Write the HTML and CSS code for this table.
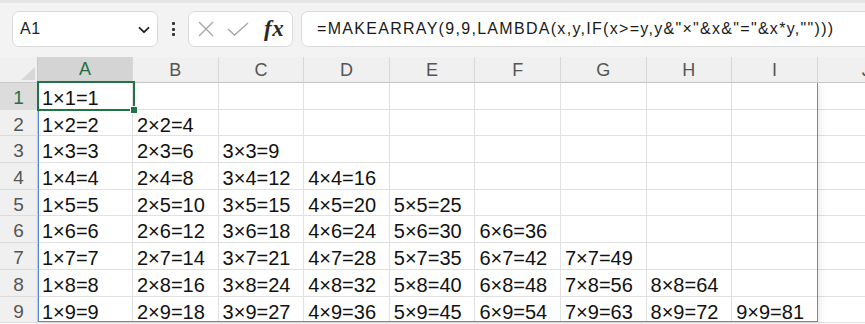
FILE: index.html
```html
<!DOCTYPE html>
<html>
<head>
<meta charset="utf-8">
<link rel="stylesheet" href="styles.css">
</head>
<body>
<div class="app">
  <div class="toolbar">
    <div class="namebox">
      <span class="ref">A1</span>
      <svg class="chev" width="12" height="8" viewBox="0 0 12 8"><path d="M1.5 1.8 L6 6.2 L10.5 1.8" fill="none" stroke="#222" stroke-width="1.8" stroke-linecap="round" stroke-linejoin="round"/></svg>
    </div>
    <div class="dots"><i></i><i></i><i></i></div>
    <div class="fxbox">
      <svg width="18" height="16" viewBox="0 0 18 16"><path d="M2 1 L16 15 M16 1 L2 15" stroke="#a6a6a6" stroke-width="1.4" fill="none"/></svg>
      <svg width="22" height="14" viewBox="0 0 22 14"><path d="M1 7 L7.5 13 L21 1" stroke="#a6a6a6" stroke-width="1.4" fill="none"/></svg>
      <span class="fx">fx</span>
    </div>
    <div class="formula">=MAKEARRAY(9,9,LAMBDA(x,y,IF(x&gt;=y,y&amp;"×"&amp;x&amp;"="&amp;x*y,"")))</div>
  </div>

  <div class="sheet">
    <div class="corner"><svg width="14" height="13" viewBox="0 0 14 13"><polygon points="14,0 14,13 0,13" fill="#d6d6d6"/></svg></div>
    <div class="h on">A</div><div class="h">B</div><div class="h">C</div><div class="h">D</div><div class="h">E</div><div class="h">F</div><div class="h">G</div><div class="h">H</div><div class="h">I</div><div class="h j">J</div>

    <div class="rh on">1</div><div class="c">1×1=1</div><div class="c"></div><div class="c"></div><div class="c"></div><div class="c"></div><div class="c"></div><div class="c"></div><div class="c"></div><div class="c"></div><div class="c"></div>
    <div class="rh">2</div><div class="c">1×2=2</div><div class="c">2×2=4</div><div class="c"></div><div class="c"></div><div class="c"></div><div class="c"></div><div class="c"></div><div class="c"></div><div class="c"></div><div class="c"></div>
    <div class="rh">3</div><div class="c">1×3=3</div><div class="c">2×3=6</div><div class="c">3×3=9</div><div class="c"></div><div class="c"></div><div class="c"></div><div class="c"></div><div class="c"></div><div class="c"></div><div class="c"></div>
    <div class="rh">4</div><div class="c">1×4=4</div><div class="c">2×4=8</div><div class="c">3×4=12</div><div class="c">4×4=16</div><div class="c"></div><div class="c"></div><div class="c"></div><div class="c"></div><div class="c"></div><div class="c"></div>
    <div class="rh">5</div><div class="c">1×5=5</div><div class="c">2×5=10</div><div class="c">3×5=15</div><div class="c">4×5=20</div><div class="c">5×5=25</div><div class="c"></div><div class="c"></div><div class="c"></div><div class="c"></div><div class="c"></div>
    <div class="rh">6</div><div class="c">1×6=6</div><div class="c">2×6=12</div><div class="c">3×6=18</div><div class="c">4×6=24</div><div class="c">5×6=30</div><div class="c">6×6=36</div><div class="c"></div><div class="c"></div><div class="c"></div><div class="c"></div>
    <div class="rh">7</div><div class="c">1×7=7</div><div class="c">2×7=14</div><div class="c">3×7=21</div><div class="c">4×7=28</div><div class="c">5×7=35</div><div class="c">6×7=42</div><div class="c">7×7=49</div><div class="c"></div><div class="c"></div><div class="c"></div>
    <div class="rh">8</div><div class="c">1×8=8</div><div class="c">2×8=16</div><div class="c">3×8=24</div><div class="c">4×8=32</div><div class="c">5×8=40</div><div class="c">6×8=48</div><div class="c">7×8=56</div><div class="c">8×8=64</div><div class="c"></div><div class="c"></div>
    <div class="rh">9</div><div class="c">1×9=9</div><div class="c">2×9=18</div><div class="c">3×9=27</div><div class="c">4×9=36</div><div class="c">5×9=45</div><div class="c">6×9=54</div><div class="c">7×9=63</div><div class="c">8×9=72</div><div class="c">9×9=81</div><div class="c"></div>

    <div class="spill"></div>
    <div class="sel"><span class="handle"></span></div>
  </div>
</div>
</body>
</html>
```

FILE: styles.css
```css
html, body {
  margin: 0;
  padding: 0;
  background: #ffffff;
}
body {
  width: 865px;
  height: 324px;
  overflow: hidden;
  font-family: "Liberation Sans", Arial, sans-serif;
}
.app {
  width: 865px;
  height: 324px;
  overflow: hidden;
}

/* ---------- formula bar ---------- */
.toolbar {
  height: 57px;
  box-sizing: border-box;
  display: flex;
  align-items: flex-start;
  padding: 8px 0 0 12px;
  background: #f3f3f3;
  border-top: 3px solid #e6e6e6;
}
.namebox {
  width: 146px;
  height: 36px;
  box-sizing: border-box;
  background: #fff;
  border: 1px solid #dadada;
  border-radius: 7px;
  display: flex;
  align-items: center;
  justify-content: space-between;
  padding: 0 7px 0 7px;
}
.ref {
  font-size: 16px;
  letter-spacing: 0.6px;
  color: #222;
}
.chev {
  margin-top: 1px;
}
.dots {
  width: 30px;
  height: 36px;
  display: flex;
  flex-direction: column;
  align-items: center;
  justify-content: center;
  gap: 2.5px;
}
.dots i {
  display: block;
  width: 3px;
  height: 3px;
  border-radius: 1px;
  background: #333;
}
.fxbox {
  width: 105px;
  height: 36px;
  box-sizing: border-box;
  background: #fff;
  border: 1px solid #dadada;
  border-radius: 7px;
  display: flex;
  align-items: center;
  padding: 0 0 0 8px;
  gap: 12px;
}
.fx {
  font-family: "Liberation Serif", "Times New Roman", serif;
  font-style: italic;
  font-weight: bold;
  font-size: 23px;
  color: #2a2a2a;
  margin-left: 3px;
  letter-spacing: 0.5px;
}
.formula {
  flex: 1;
  margin-left: 8px;
  margin-right: -12px;
  height: 36px;
  box-sizing: border-box;
  background: #fff;
  border: 1px solid #dadada;
  border-radius: 7px;
  padding-left: 15px;
  font-size: 16px;
  letter-spacing: 1.3px;
  line-height: 34px;
  color: #1a1a1a;
  white-space: nowrap;
  overflow: hidden;
}

/* ---------- sheet ---------- */
.sheet {
  position: relative;
  display: grid;
  grid-template-columns: 38px 95px repeat(8, 85.6px) 1fr;
  grid-template-rows: 26px;
  grid-auto-rows: 26.7px;
  background: #fff;
}
.corner {
  background: #f0f0f0;
  border-right: 1px solid #c9c9c9;
  border-bottom: 1px solid #c9c9c9;
  box-sizing: border-box;
  display: flex;
  align-items: flex-end;
  justify-content: flex-end;
  padding: 0 2px 2px 0;
}
.h {
  background: #f0f0f0;
  border-right: 1px solid #d8d8d8;
  border-bottom: 1px solid #c9c9c9;
  box-sizing: border-box;
  text-align: center;
  font-size: 18px;
  line-height: 26px;
  color: #555;
}
.h.on {
  background: #d4d4d4;
  color: #1e7145;
  border-bottom: 2px solid #217346;
  line-height: 25px;
}
.h.j {
  text-align: left;
  padding-left: 44px;
  border-right: none;
}
.rh {
  background: #f0f0f0;
  border-right: 1px solid #c9c9c9;
  border-bottom: 1px solid #dcdcdc;
  box-sizing: border-box;
  text-align: center;
  font-size: 19px;
  line-height: 24px;
  padding-top: 3px;
  color: #555;
}
.rh.on {
  background: #dcdcdc;
  color: #1e7145;
}
.c {
  border-right: 1px solid #e1e1e1;
  border-bottom: 1px solid #e1e1e1;
  box-sizing: border-box;
  font-size: 20px;
  line-height: 24px;
  padding: 3px 0 0 4px;
  color: #111;
  white-space: nowrap;
  overflow: hidden;
}

.spill {
  position: absolute;
  left: 38px;
  top: 26px;
  width: 780px;
  height: 239px;
  border: 1px solid #5b8ad6;
  border-top: none;
  box-sizing: border-box;
  box-shadow: 3px 2px 6px rgba(0, 0, 0, 0.07);
  pointer-events: none;
}
.sel {
  position: absolute;
  left: 37px;
  top: 24px;
  width: 98px;
  height: 30px;
  border: 2px solid #217346;
  box-sizing: border-box;
}
.handle {
  position: absolute;
  right: -5px;
  bottom: -5px;
  width: 6px;
  height: 6px;
  background: #217346;
  border: 1px solid #fff;
}
```
